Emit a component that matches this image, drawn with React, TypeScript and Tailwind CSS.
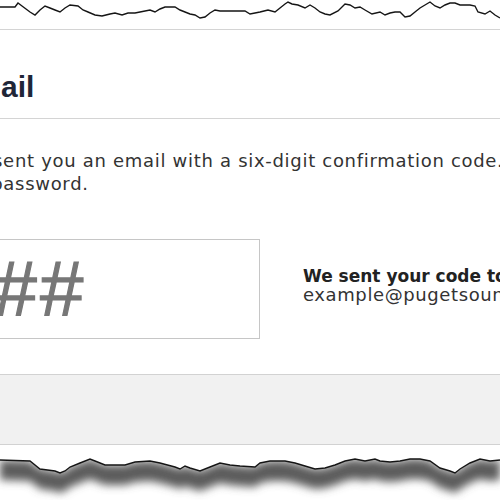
import React from "react";

const topEdge: [number, number][] = [
  [0, 7], [15, 7], [18, 3], [22, 6], [30, 12], [35, 15], [40, 10], [45, 6], [50, 8], [55, 10],
  [60, 12], [65, 8], [70, 5], [78, 6], [83, 10], [88, 12], [95, 15], [102, 16], [110, 14], [115, 13],
  [122, 15], [128, 13], [135, 13], [140, 12], [150, 10], [155, 12], [160, 9], [165, 7], [175, 7],
  [180, 10], [185, 12], [190, 14], [195, 15], [200, 18], [205, 17], [210, 13], [215, 10], [220, 11],
  [230, 11], [245, 11], [250, 14], [255, 13], [260, 12], [268, 10], [275, 12], [280, 8], [285, 4],
  [288, 2], [292, 4], [298, 5], [305, 8], [310, 5], [315, 8], [320, 12], [325, 14], [330, 15],
  [338, 11], [345, 4], [350, 5], [355, 8], [360, 7], [365, 10], [372, 14], [380, 12], [385, 15],
  [390, 13], [395, 12], [400, 12], [405, 17], [410, 16], [415, 12], [420, 8], [425, 5], [430, 2],
  [435, 6], [440, 8], [445, 5], [450, 3], [455, 3], [460, 5], [470, 5], [475, 6], [478, 12],
  [485, 14], [490, 11], [495, 15], [500, 18],
];

const bottomEdge: [number, number][] = [
  [0, 14], [30, 15], [40, 23], [55, 25], [60, 27], [65, 25], [70, 21], [80, 17], [90, 13], [95, 15],
  [105, 19], [125, 19], [135, 16], [150, 15], [160, 17], [175, 21], [180, 23], [185, 20], [190, 22],
  [200, 25], [210, 21], [220, 17], [230, 19], [240, 20], [255, 21], [260, 17], [270, 15], [285, 15],
  [295, 17], [305, 20], [315, 23], [325, 22], [335, 19], [345, 15], [355, 13], [365, 15], [375, 13],
  [380, 15], [390, 16], [400, 15], [410, 13], [420, 13], [430, 15], [440, 22], [450, 25], [455, 27],
  [460, 23], [470, 17], [480, 13], [490, 15], [500, 14],
];

const pts = (a: [number, number][], dy = 0) => a.map(([x, y]) => `${x},${y + dy}`).join(" ");

function TopTear() {
  return (
    <svg width="500" height="29" viewBox="0 0 500 29" className="block shrink-0">
      <polyline points={pts(topEdge)} fill="none" stroke="#151515" strokeWidth="1.4" />
    </svg>
  );
}

function BottomTear() {
  const below = `${pts(bottomEdge)} 500,55 0,55`;
  const shadow = `${pts(bottomEdge)} ${pts([...bottomEdge].reverse(), 20)}`;
  return (
    <svg width="500" height="55" viewBox="0 0 500 55" className="block shrink-0">
      <defs>
        <filter id="blur" x="-10%" y="-50%" width="120%" height="200%">
          <feGaussianBlur stdDeviation="4" />
        </filter>
        <clipPath id="below">
          <polygon points={below} />
        </clipPath>
      </defs>
      <g clipPath="url(#below)">
        <polygon points={shadow} fill="#5c5c5c" filter="url(#blur)" />
      </g>
      <polyline points={pts(bottomEdge)} fill="none" stroke="#151515" strokeWidth="1.4" />
    </svg>
  );
}

export default function App() {
  return (
    <div className="w-[500px] h-[500px] overflow-hidden bg-white flex flex-col">
      <TopTear />

      {/* cropped card: extends past both edges of the shot */}
      <div className="ml-[-214px] w-[820px] shrink-0 border-t border-[#d4d4d4]">
        <div className="h-[89px] pt-[42px] border-b border-[#d4d4d4]">
          <h1 className="whitespace-nowrap text-[30px] leading-[30px] font-bold text-[#1f2638] font-['Liberation_Sans',sans-serif]">
            Check your email
          </h1>
        </div>

        <div className="mt-[30px] text-[18px] leading-[23px] tracking-[0.7px] text-[#333] font-['DejaVu_Sans',sans-serif]">
          <p className="whitespace-nowrap ml-[-6px]">To protect you, we've sent you an email with a six-digit confirmation code.</p>
          <p className="whitespace-nowrap ml-[-4px]">Enter it to reset your password.</p>
        </div>

        <div className="mt-[44px] flex items-start gap-[43px]">
          <input
            type="text"
            placeholder="######"
            className="w-[474px] h-[100px] border border-[#c6c6c6] bg-white pl-[21px] text-[78px] tracking-[3px] text-[#777] placeholder:text-[#777] placeholder:[-webkit-text-stroke:1.2px_#777] outline-none font-['Liberation_Sans',sans-serif]"
          />
          <div className="mt-[29px] whitespace-nowrap font-['DejaVu_Sans',sans-serif]">
            <p className="text-[17px] leading-[17px] font-bold text-[#222]">We sent your code to</p>
            <p className="text-[18px] leading-[20px] tracking-[0.6px] text-[#333]">example@pugetsound.edu</p>
          </div>
        </div>

        <div className="mt-[35px] h-[71px] border-y border-[#d2d2d2] bg-[#f1f1f1]" />
      </div>

      <div className="h-[1px] shrink-0" />
      <BottomTear />
    </div>
  );
}
